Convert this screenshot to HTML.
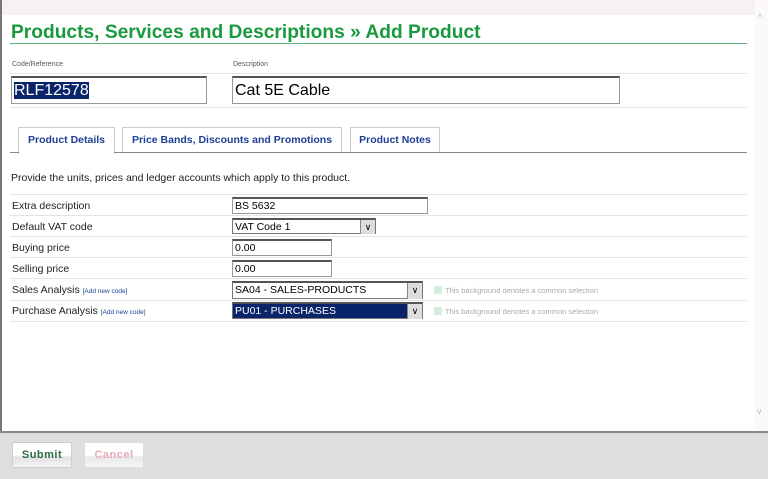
<!DOCTYPE html>
<html><head><style>
*{margin:0;padding:0;box-sizing:border-box}
body{width:768px;height:479px;overflow:hidden;background:#fff;font-family:"Liberation Sans",Arial,sans-serif;position:relative}
.a{position:absolute}
.lbl{font-size:10.5px;color:#222}
.inp{position:absolute;border:1px solid #999;border-top:2px solid #555;background:#fff;font-size:10.5px;padding-left:2px;line-height:15px}
.sel{position:absolute;border:1px solid #777;border-top:2px solid #555;background:#fff;font-size:10.5px;padding-left:2px;line-height:14px;height:16px}
.sel .b{position:absolute;right:0;top:0;width:15px;height:14px;background:#ddd;border-left:1px solid #888;font-size:9px;text-align:center;line-height:14px;color:#000}
.tab{position:absolute;top:127px;height:26px;border:1px solid #ccc;border-bottom:none;font-size:10.5px;font-weight:bold;color:#1c3f94;text-align:center;line-height:25px;background:#fff}
.hr{position:absolute;height:1px;background:#e4e4e4;left:10px;width:737px}
.note{position:absolute;left:434px;font-size:7.5px;color:#aaa}
.note i{display:inline-block;width:8px;height:8px;background:#d6eedd;margin-right:3px;vertical-align:-1px}
.addc{font-size:6.5px;color:#1c3f94}
</style></head><body>
<div class="a" style="left:0;top:0;width:2px;height:432px;background:#777"></div>
<div class="a" style="left:2px;top:0;width:753px;height:15px;background:#f6f2f4"></div>
<div class="a" style="left:755px;top:0;width:13px;height:432px;background:#fcf9fb"></div>
<div class="a" style="left:758px;top:12px;font-size:9px;color:#bbb">^</div>
<div class="a" style="left:757px;top:406px;font-size:9px;color:#bbb">v</div>
<div class="a" style="left:11px;top:22px;font-size:19.2px;font-weight:bold;color:#1a9a3e;white-space:nowrap">Products, Services and Descriptions » Add Product</div>
<div class="a" style="left:10px;top:43px;width:737px;height:1px;background:#5bb57a"></div>
<div class="a" style="left:12px;top:61px;font-size:7px;color:#555">Code/Reference</div>
<div class="a" style="left:233px;top:61px;font-size:7px;color:#555">Description</div>
<div class="hr" style="top:73px"></div>
<div class="inp" style="left:11px;top:76px;width:196px;height:28px;font-size:16px;line-height:25px"><span style="background:#0a246a;color:#fff">RLF12578</span></div>
<div class="inp" style="left:232px;top:76px;width:388px;height:28px;font-size:16px;line-height:25px">Cat 5E Cable</div>
<div class="hr" style="top:107px"></div>
<div class="tab" style="left:18px;width:97px;height:27px">Product Details</div>
<div class="tab" style="left:122px;width:220px">Price Bands, Discounts and Promotions</div>
<div class="tab" style="left:350px;width:90px">Product Notes</div>
<div class="a" style="left:10px;top:152px;width:737px;height:1px;background:#888"></div>
<div class="a" style="left:19px;top:152px;width:95px;height:1px;background:#fff"></div>
<div class="a lbl" style="left:11px;top:172px">Provide the units, prices and ledger accounts which apply to this product.</div>
<div class="hr" style="top:194px"></div>
<div class="a lbl" style="left:12px;top:200px">Extra description</div>
<div class="inp" style="left:232px;top:197px;width:196px;height:17px">BS 5632</div>
<div class="hr" style="top:215px"></div>
<div class="a lbl" style="left:12px;top:221px">Default VAT code</div>
<div class="sel" style="left:232px;top:218px;width:144px">VAT Code 1<span class="b">&#8744;</span></div>
<div class="hr" style="top:236px"></div>
<div class="a lbl" style="left:12px;top:242px">Buying price</div>
<div class="inp" style="left:232px;top:239px;width:100px;height:17px">0.00</div>
<div class="hr" style="top:257px"></div>
<div class="a lbl" style="left:12px;top:263px">Selling price</div>
<div class="inp" style="left:232px;top:260px;width:100px;height:17px">0.00</div>
<div class="hr" style="top:278px"></div>
<div class="a lbl" style="left:12px;top:284px">Sales Analysis <span class="addc">[Add new code]</span></div>
<div class="sel" style="left:232px;top:281px;width:191px;height:18px">SA04 - SALES-PRODUCTS<span class="b" style="height:16px">&#8744;</span></div>
<div class="note" style="top:286px"><i></i>This background denotes a common selection</div>
<div class="hr" style="top:300px"></div>
<div class="a lbl" style="left:12px;top:305px">Purchase Analysis <span class="addc">[Add new code]</span></div>
<div class="sel" style="left:232px;top:302px;width:191px;height:17px;background:#0a246a;color:#fff">PU01 - PURCHASES<span class="b" style="height:15px">&#8744;</span></div>
<div class="note" style="top:307px"><i></i>This background denotes a common selection</div>
<div class="hr" style="top:321px"></div>
<div class="a" style="left:0;top:431px;width:768px;height:2px;background:#888"></div>
<div class="a" style="left:0;top:433px;width:768px;height:46px;background:#dedede"></div>
<div class="a" style="left:12px;top:442px;width:60px;height:26px;border:1px solid #ccc;border-radius:2px;background:linear-gradient(#fff 50%,#e2e2e2 60%,#f4f4f4);font-size:11px;font-weight:bold;color:#2a6b45;text-align:center;line-height:24px;letter-spacing:.5px">Submit</div>
<div class="a" style="left:84px;top:442px;width:60px;height:26px;border:1px solid #ddd;border-radius:2px;background:linear-gradient(#fff 50%,#e8e8e8 60%,#f6f6f6);font-size:11px;font-weight:bold;color:#e5aab4;text-align:center;line-height:24px;letter-spacing:.5px">Cancel</div>
</body></html>
